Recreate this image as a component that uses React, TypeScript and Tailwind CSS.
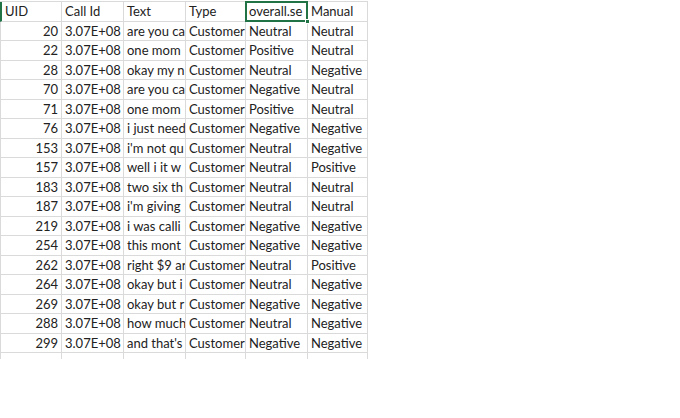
import React from "react";

const rows: [number, string, string, string, string][] = [
  [20, "are you ca", "Customer", "Neutral", "Neutral"],
  [22, "one mom", "Customer", "Positive", "Neutral"],
  [28, "okay my n", "Customer", "Neutral", "Negative"],
  [70, "are you ca", "Customer", "Negative", "Neutral"],
  [71, "one mom", "Customer", "Positive", "Neutral"],
  [76, "i just need", "Customer", "Negative", "Negative"],
  [153, "i'm not qu", "Customer", "Neutral", "Negative"],
  [157, "well i it w", "Customer", "Neutral", "Positive"],
  [183, "two six th", "Customer", "Neutral", "Neutral"],
  [187, "i'm giving", "Customer", "Neutral", "Neutral"],
  [219, "i was calli", "Customer", "Negative", "Negative"],
  [254, "this mont", "Customer", "Negative", "Negative"],
  [262, "right $9 ar", "Customer", "Neutral", "Positive"],
  [264, "okay but i", "Customer", "Neutral", "Negative"],
  [269, "okay but r", "Customer", "Negative", "Negative"],
  [288, "how much", "Customer", "Neutral", "Negative"],
  [299, "and that's", "Customer", "Negative", "Negative"],
];

const cell =
  "h-[19.5px] border-r border-b border-[#dadada] px-[3px] leading-[19px] whitespace-nowrap overflow-hidden";

const App = () => {
  return (
    <div className="w-[680px] h-[418px] bg-white text-[#222] font-['Lato','Open_Sans',sans-serif] text-[13px]">
      <div className="pt-[1px]">
        <div className="grid grid-cols-[62px_62px_62px_60px_62px_60px] w-[368px] border-t border-[#dadada]">
          {/* header */}
          <div className={`${cell} border-l-2 border-l-[#217346]`}>UID</div>
          <div className={cell}>Call Id</div>
          <div className={cell}>Text</div>
          <div className={cell}>Type</div>
          <div className={`${cell} relative overflow-visible`}>
            <div className="overflow-hidden">overall.se</div>
            <div className="absolute -inset-[1px] border-2 border-[#217346]" />
            <div className="absolute -right-[3px] -bottom-[3px] size-[5px] bg-[#217346] border border-white" />
          </div>
          <div className={cell}>Manual</div>

          {rows.map(([uid, text, type, overall, manual]) => (
            <React.Fragment key={uid}>
              <div className={`${cell} border-l border-l-[#dadada] text-right`}>{uid}</div>
              <div className={`${cell} text-right`}>3.07E+08</div>
              <div className={cell}>{text}</div>
              <div className={cell}>{type}</div>
              <div className={cell}>{overall}</div>
              <div className={cell}>{manual}</div>
            </React.Fragment>
          ))}

          {/* gridlines running on below the last row */}
          <div className="h-[6px] border-l border-r border-[#dadada]" />
          <div className="h-[6px] border-r border-[#dadada]" />
          <div className="h-[6px] border-r border-[#dadada]" />
          <div className="h-[6px] border-r border-[#dadada]" />
          <div className="h-[6px] border-r border-[#dadada]" />
          <div className="h-[6px] border-r border-[#dadada]" />
        </div>
      </div>
    </div>
  );
};

export default App;
